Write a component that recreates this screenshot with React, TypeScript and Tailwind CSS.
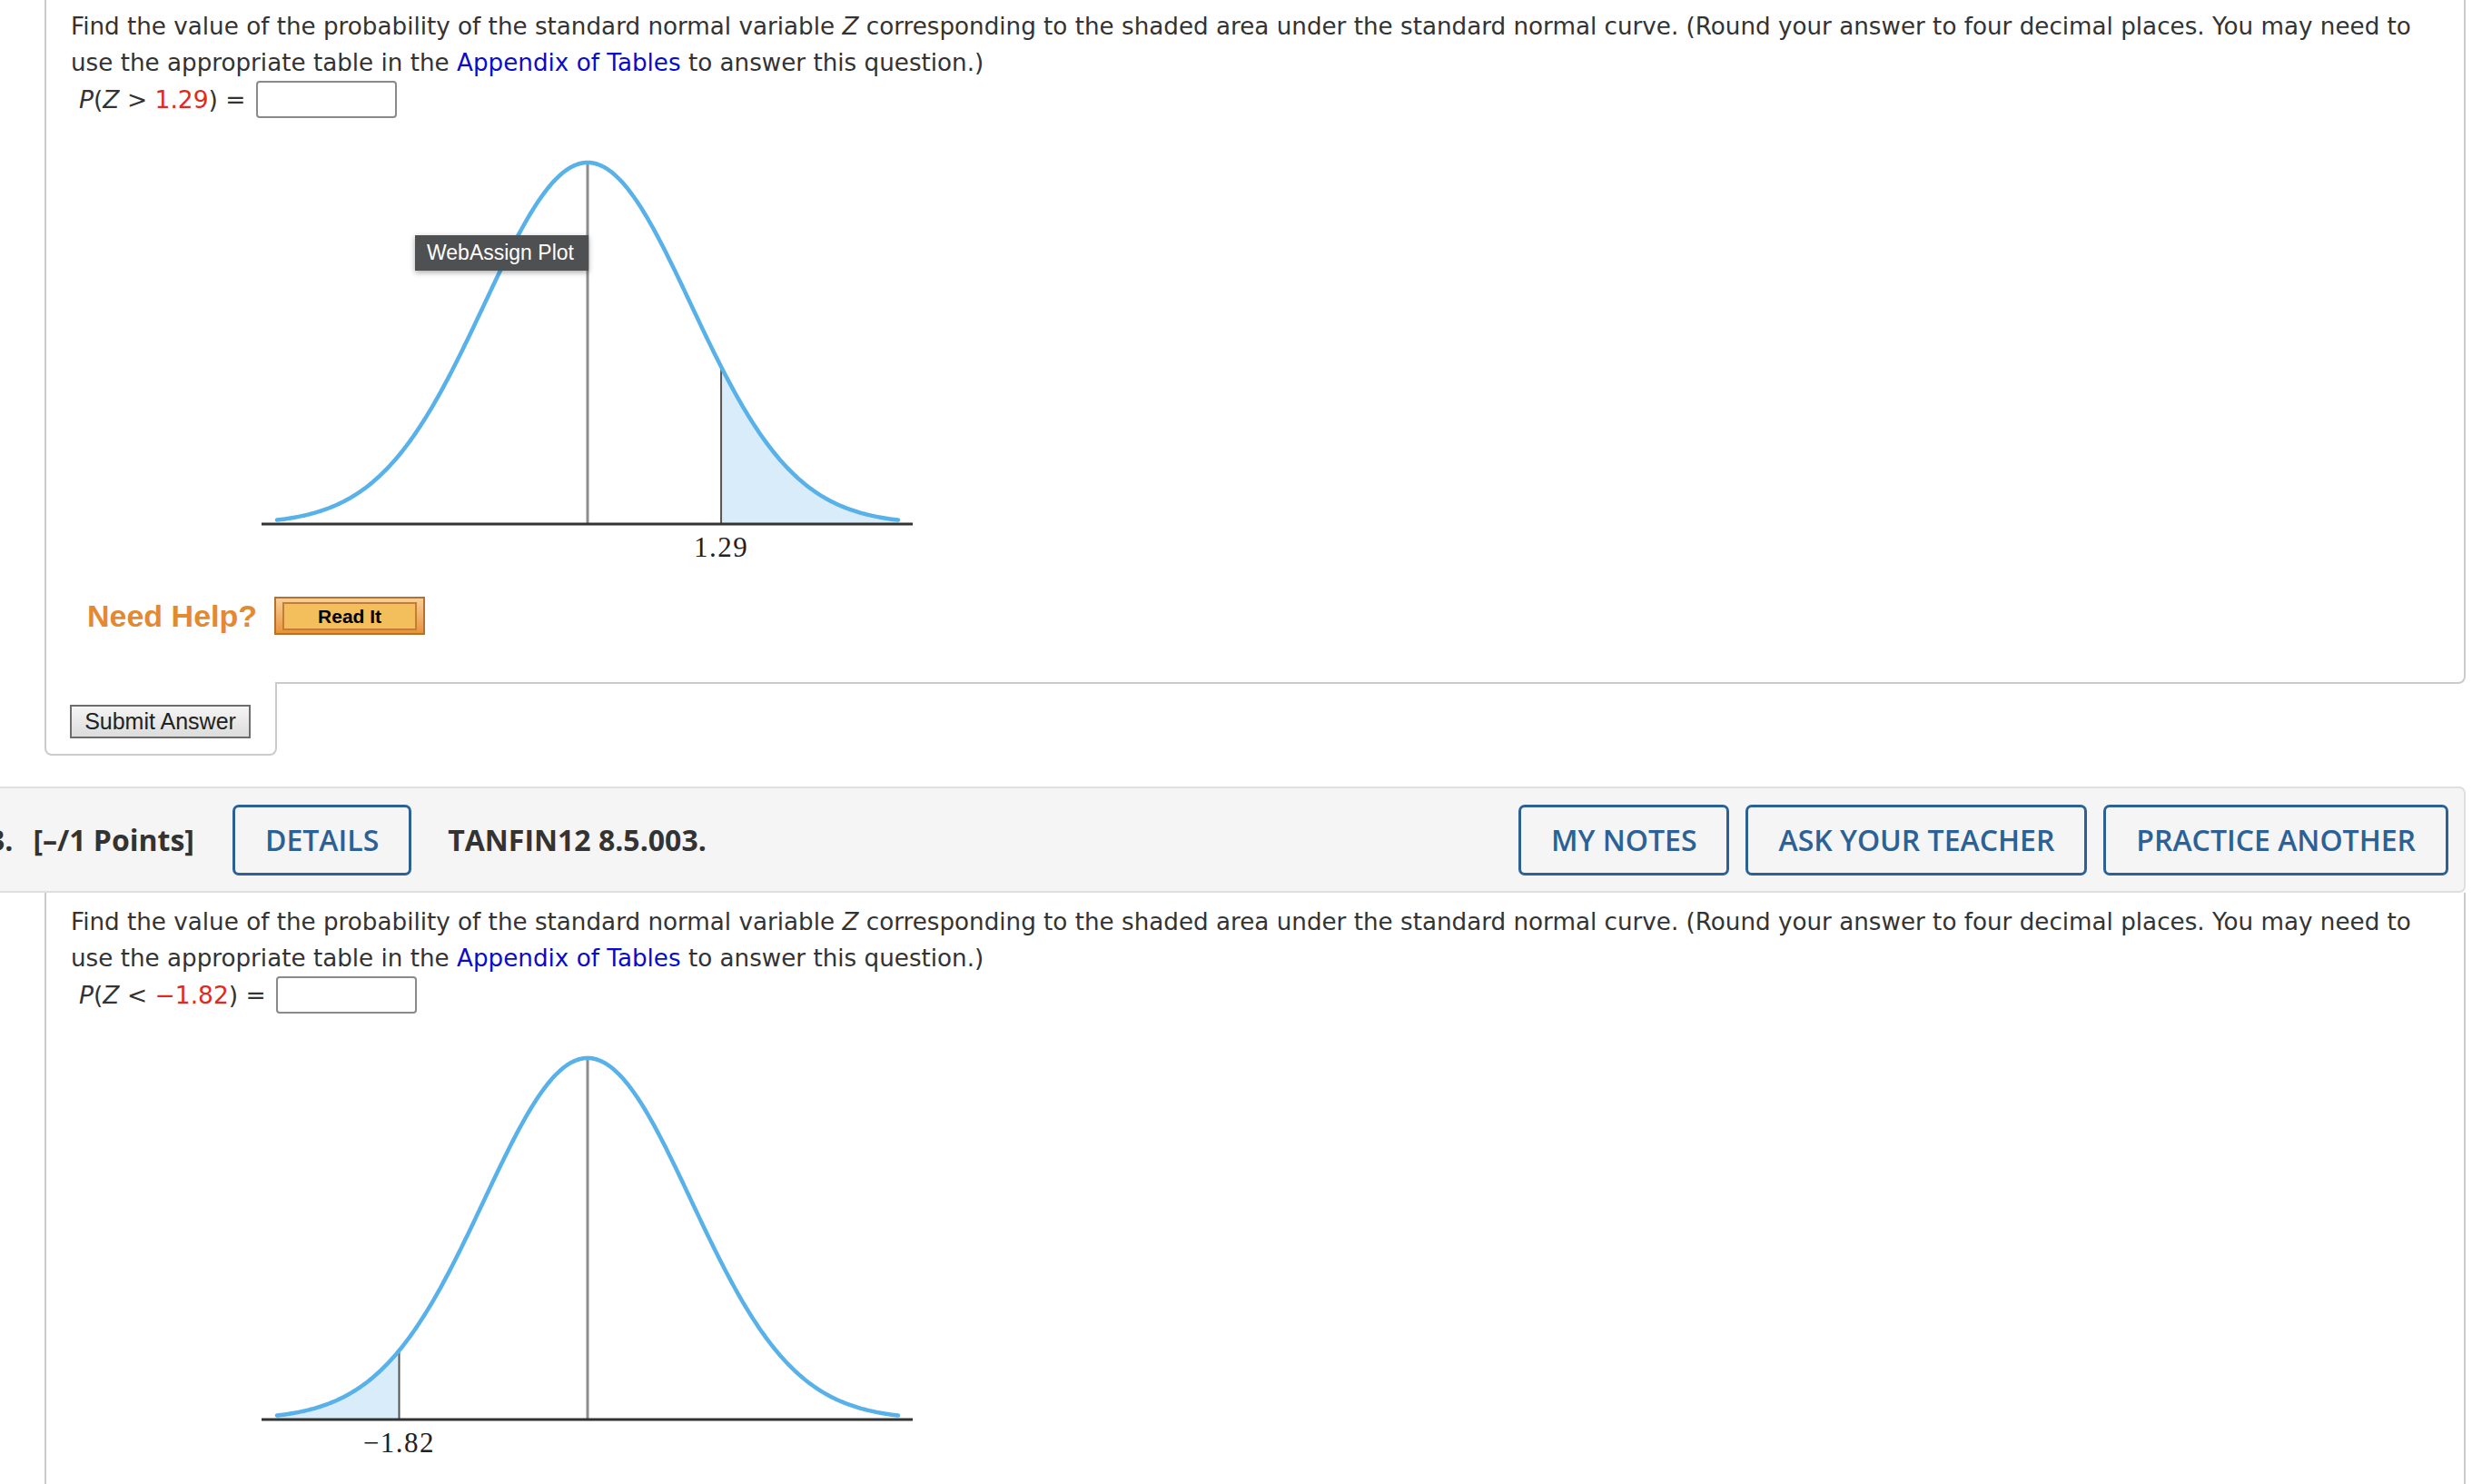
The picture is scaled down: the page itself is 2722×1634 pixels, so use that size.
import React from 'react';

const CX = 359;
const BASE = 430;
const SX = 114;
const AMP = 398;

const px = (z: number) => CX + SX * z;
const py = (z: number) => BASE - AMP * Math.exp((-z * z) / 2);

function curvePoints(from: number, to: number) {
  const pts: string[] = [];
  const steps = Math.max(2, Math.round((to - from) / 0.02));
  for (let i = 0; i <= steps; i++) {
    const z = from + ((to - from) * i) / steps;
    pts.push(`${px(z).toFixed(2)},${py(z).toFixed(2)}`);
  }
  return pts;
}

function NormalPlot({ z, side, label, tooltip }: { z: number; side: 'left' | 'right'; label: string; tooltip?: boolean }) {
  const full = curvePoints(-3, 3);
  const shade = side === 'right' ? curvePoints(z, 3) : curvePoints(-3, z);
  const shadeClose = side === 'right'
    ? [...shade, `${px(3)},${BASE}`, `${px(z)},${BASE}`]
    : [...shade, `${px(z)},${BASE}`, `${px(-3)},${BASE}`];

  return (
    <div className="relative ml-[210px] mt-[17px] h-[480px] w-[720px]">
      <svg width="720" height="480" viewBox="0 0 720 480">
        <polygon points={shadeClose.join(' ')} fill="#d9ecf9" />
        <line x1={CX} y1={py(0)} x2={CX} y2={BASE} stroke="#8d8d8d" strokeWidth="3" />
        <line x1={px(z)} y1={py(z)} x2={px(z)} y2={BASE + 1} stroke="#555" strokeWidth="2" />
        <polyline points={full.join(' ')} fill="none" stroke="#58b1e9" strokeWidth="4.5" strokeLinejoin="round" strokeLinecap="round" />
        <line x1="0" y1={BASE} x2="717" y2={BASE} stroke="#333" strokeWidth="3" />
        <text x={px(z)} y="466" textAnchor="middle" fontFamily="'Liberation Serif', serif" fontSize="31" letterSpacing="1.5" fill="#222">{label}</text>
      </svg>
      {tooltip && (
        <div className="absolute left-[169px] top-[112px] flex h-[39px] w-[191px] items-center bg-[#4f5051] pl-[13px] font-['Liberation_Sans',Arial,sans-serif] text-[23px] text-white shadow-[0_2px_6px_rgba(0,0,0,0.35)]">
          WebAssign Plot
        </div>
      )}
    </div>
  );
}

function Question({ op, value, z, side, tooltip }: { op: string; value: string; z: number; side: 'left' | 'right'; tooltip?: boolean }) {
  return (
    <div className="pl-[27px] pt-[12px] font-['DejaVu_Sans',Verdana,sans-serif] text-[#333]">
      <p className="text-[26.2px] leading-[40px]">
        <span className="block whitespace-nowrap">
          Find the value of the probability of the standard normal variable <i>Z</i> corresponding to the shaded area under the standard normal curve. (Round your answer to four decimal places. You may need to
        </span>
        <span className="block whitespace-nowrap">
          use the appropriate table in the <span className="text-[#0b0bcc]">Appendix of Tables</span> to answer this question.)
        </span>
      </p>
      <div className="flex h-[41px] items-center pl-[9px] text-[26.5px]">
        <span className="whitespace-nowrap">
          <i>P</i>(<i>Z</i> {op} <span className="text-[#e5281c]">{value}</span>) =
        </span>
        <span className="ml-[11px] h-[41px] w-[155px] rounded-[4px] border-2 border-[#8a8a8a] bg-white" />
      </div>
      <NormalPlot z={z} side={side} label={value} tooltip={tooltip} />
    </div>
  );
}

function HeaderButton({ children }: { children: React.ReactNode }) {
  return (
    <button className="flex h-[78px] items-center rounded-[7px] border-[3px] border-[#2c6196] px-[33px] text-[32px] font-semibold text-[#2c6196]">
      {children}
    </button>
  );
}

export default function App() {
  return (
    <div className="h-[1634px] w-[2722px] overflow-hidden bg-white">
      <div className="w-[2715px] pl-[49px]">
        {/* question 2 (scrolled) */}
        <div className="-mt-[3px] rounded-br-[8px] border-b-2 border-l-2 border-r-2 border-[#cbcbcb] pb-[52px]">
          <Question op=">" value="1.29" z={1.29} side="right" tooltip />
          <div className="mt-[30px] flex h-[42px] items-center pl-[45px]">
            <span className="font-['Liberation_Sans',Arial,sans-serif] text-[34px] font-bold leading-none text-[#e38a31]">Need Help?</span>
            <div className="ml-[19px] flex h-[42px] w-[166px] items-center justify-center border-2 border-[#b3722e] bg-gradient-to-b from-[#f7cf96] to-[#e8943a] p-[4px]">
              <div className="flex h-[31px] w-[148px] items-center justify-center border-2 border-[#c37d35] bg-[#f2bf5c] font-['Liberation_Sans',Arial,sans-serif] text-[21px] font-bold leading-none text-black">
                Read It
              </div>
            </div>
          </div>
        </div>
        <div className="relative z-10 -mt-[2px] w-[256px] rounded-b-[8px] border-b-2 border-l-2 border-r-2 border-[#cbcbcb] bg-white pb-[17px] pl-[26px] pt-[25px]">
          <button className="flex h-[37px] w-[199px] items-center justify-center border-2 border-[#6d6d6d] bg-gradient-to-b from-[#f5f5f5] to-[#dcdcdc] font-['Liberation_Sans',Arial,sans-serif] text-[25px] text-[#222]">
            Submit Answer
          </button>
        </div>

        {/* question 3 header */}
        <div className="-ml-[49px] mt-[34px] flex h-[117px] items-center rounded-r-[7px] border-b-2 border-r-2 border-t-2 border-[#dfdfdf] bg-[#f5f5f5] pr-[17px] font-['Open_Sans',sans-serif] text-[32px] text-[#333]">
          <span className="-ml-[13px] font-bold">3.</span>
          <span className="ml-[22px] font-bold">[–/1 Points]</span>
          <span className="ml-[42px]"><HeaderButton>DETAILS</HeaderButton></span>
          <span className="ml-[40px] font-bold">TANFIN12 8.5.003.</span>
          <div className="ml-auto flex gap-[18px]">
            <HeaderButton>MY NOTES</HeaderButton>
            <HeaderButton>ASK YOUR TEACHER</HeaderButton>
            <HeaderButton>PRACTICE ANOTHER</HeaderButton>
          </div>
        </div>

        {/* question 3 body */}
        <div className="h-[700px] border-l-2 border-r-2 border-[#cbcbcb]">
          <Question op="<" value="−1.82" z={-1.82} side="left" />
        </div>
      </div>
    </div>
  );
}
